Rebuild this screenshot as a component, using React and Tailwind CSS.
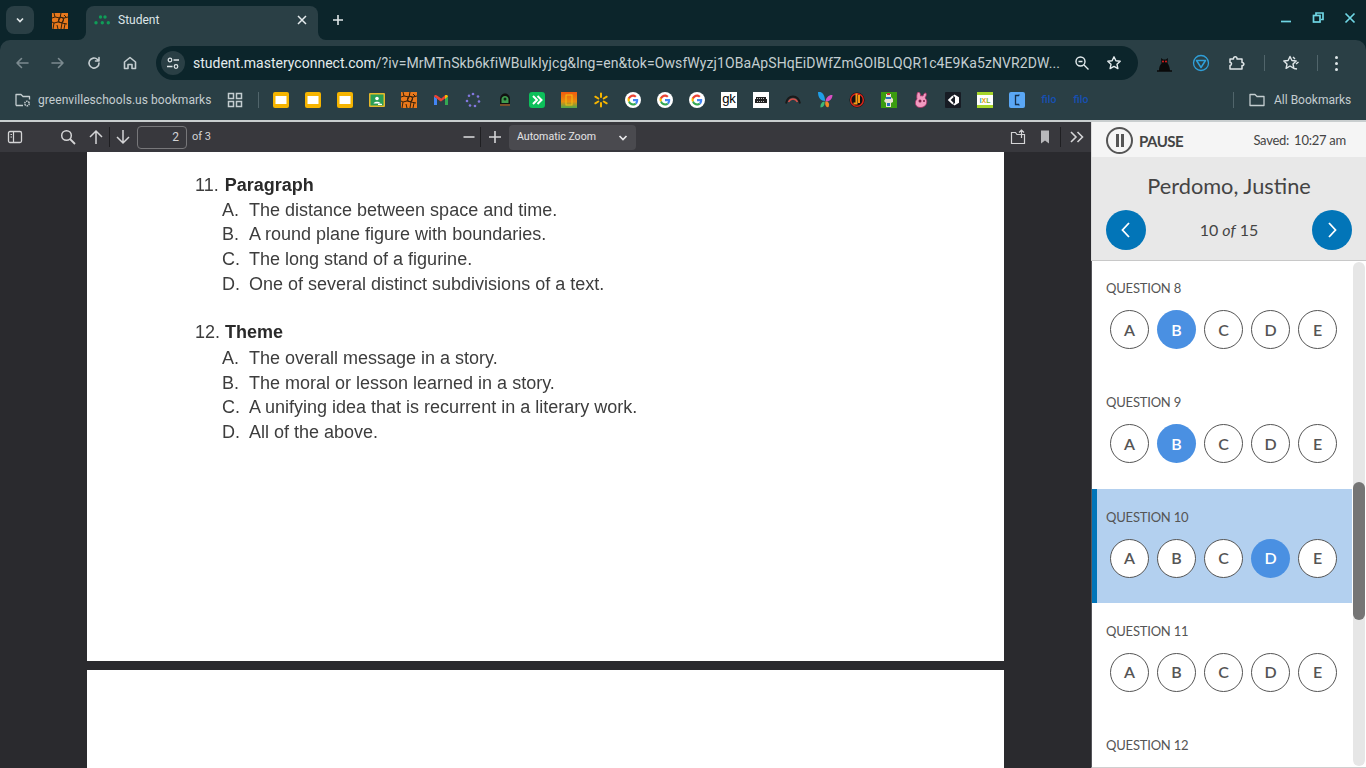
import React from "react";
import { Fragment } from "react";

const Ic = ({ s = 16, children, className = "", vb }) => (
  <svg width={s} height={s} viewBox={vb || `0 0 ${s} ${s}`} fill="none" className={`shrink-0 ${className}`}>{children}</svg>
);

const stroke = { stroke: "currentColor", strokeWidth: 1.6, strokeLinecap: "round", strokeLinejoin: "round" };

const Slides = () => (
  <Ic><rect width="16" height="16" rx="2" fill="#f5b400" /><rect x="2.500" y="4" width="11" height="8" fill="#fff" /></Ic>
);
const Classroom = () => (
  <Ic><rect y="1" width="16" height="14" rx="1" fill="#e4b82a" /><rect x="1.500" y="2.500" width="13" height="11" fill="#2a9d55" /><circle cx="8" cy="6.500" r="1.800" fill="#fff" /><path d="M4.500 11.500c.5-2.500 6.500-2.500 7 0z" fill="#fff" /><rect x="9" y="11.800" width="4" height="1.200" fill="#fff" /></Ic>
);
const Mosaic = () => (
  <Ic>
    <rect width="16" height="16" fill="#e8781c" />
    <path d="M2 0l1 4-3 1M3 4l5 1 1-5M8 5l-2 4 4 1 2-5-4-1M12 5l4-1M10 10l-1 6M6 9l-4 1-1 6M2 10l-2-1M10 10l5 1M13 11l-1 5M5 12l1 4M12 2l2 2" stroke="#33200c" strokeWidth="1" />
    <circle cx="9" cy="7" r="2.600" stroke="#33200c" strokeWidth=".9" />
  </Ic>
);
const Gmail = () => (
  <Ic>
    <path d="M1 13V4.500l3 2V13z" fill="#4285f4" /><path d="M12 13V6.500l3-2V13z" fill="#34a853" />
    <path d="M1 4.500C1 3 2.500 2.500 3.500 3.200L8 6.500 8 9.500 1 4.500z" fill="#ea4335" />
    <path d="M12 3.200C13.500 2.500 15 3 15 4.500l-3 2.500z" fill="#fbbc04" /><path d="M4 3.800l4 3 4-3.600v3.300L8 9.500 4 6.500z" fill="#ea4335" />
  </Ic>
);
const Ring = () => (
  <Ic>
    <circle cx="8" cy="8" r="5.800" stroke="#3a3f4a" strokeWidth="1" />
    {[[8, 2], [13, 4.500], [14, 9.500], [10, 14], [5, 13.500], [2, 9], [4, 3.800]].map(([x, y], i) => <circle key={i} cx={x} cy={y} r="1.300" fill="#8278e0" />)}
  </Ic>
);
const Pack = () => (
  <Ic>
    <path d="M3 14V7c0-3 2-5.500 5-5.500S13 4 13 7v7z" fill="#111" />
    <path d="M4.500 11V7.500C4.500 5.500 6 4 8 4s3.500 1.500 3.500 3.500V11z" fill="#3f9d4f" />
    <circle cx="8" cy="7" r="1.500" fill="#0c2a18" /><rect x="3" y="12" width="10" height="2" fill="#7a4f2a" />
  </Ic>
);
const GreenChev = () => (
  <Ic>
    <rect width="16" height="16" rx="3" fill="#0cbf5a" />
    <path d="M4 4l4 4-4 4M8.500 4l4 4-4 4" stroke="#fff" strokeWidth="2" />
  </Ic>
);
const OrangeBox = () => (
  <Ic>
    <defs><linearGradient id="og" x1="0" y1="0" x2="0" y2="1"><stop offset="0" stopColor="#f05a10" /><stop offset=".6" stopColor="#e8900f" /><stop offset="1" stopColor="#4ea64a" /></linearGradient></defs>
    <rect width="16" height="16" fill="url(#og)" /><rect x="5" y="3" width="6" height="10" stroke="#f3c012" strokeWidth="1" />
  </Ic>
);
const Spark = () => (
  <Ic>
    <g stroke="#f7b500" strokeWidth="2" strokeLinecap="round">
      <path d="M8 1.500v3.500M8 11v3.500M2.300 4.700l3 1.800M10.700 9.500l3 1.800M2.300 11.300l3-1.800M10.700 6.500l3-1.800" />
    </g>
  </Ic>
);
const Goog = () => (
  <Ic>
    <circle cx="8" cy="8" r="8" fill="#fff" />
    <path d="M13.200 8.200c0-.4 0-.8-.1-1.100H8v2.100h3c-.1.700-.5 1.300-1.100 1.700l1.700 1.300c1-.9 1.600-2.300 1.600-4z" fill="#4285f4" />
    <path d="M8 13.500c1.500 0 2.700-.5 3.600-1.300l-1.700-1.300c-.5.300-1.100.5-1.900.5-1.400 0-2.700-1-3.100-2.300L3.100 10C4 12.100 5.800 13.500 8 13.500z" fill="#34a853" />
    <path d="M4.900 8.600c-.2-.7-.2-1.500 0-2.200L3.100 5.100c-.8 1.600-.8 3.400 0 4.900z" fill="#fbbc05" />
    <path d="M8 4.700c.8 0 1.500.3 2.100.8l1.500-1.500C10.600 3.100 9.400 2.500 8 2.500 5.800 2.500 4 3.800 3.100 5.700l1.800 1.400C5.300 5.700 6.600 4.700 8 4.700z" fill="#ea4335" />
  </Ic>
);
const Gk = () => (
  <div className="w-4 h-4 shrink-0 bg-white text-black text-[13px] leading-[14px] text-center font-['Liberation_Sans',sans-serif]">gk</div>
);
const Blob = () => (
  <Ic>
    <rect width="16" height="16" fill="#fff" />
    <path d="M3 5h10v2h1v4H2V7h1z" fill="#222" /><path d="M4 6.500h8M4 9.500h8" stroke="#bbb" strokeWidth="1" strokeDasharray="1 1" />
  </Ic>
);
const Arc = () => (
  <Ic>
    <path d="M1 11.500C2 6.500 5 4.500 8 4.500S14 6.500 15 11.500" stroke="#1a1a1a" strokeWidth="1.800" />
    <path d="M3.500 10C4.500 8 6 7 8 7s3.500 1 4.500 3" stroke="#d8504a" strokeWidth="1.500" />
  </Ic>
);
const Butterfly = () => (
  <Ic>
    <path d="M1 0c4-1 7 3 7 9-4 0-7-3-7-9z" fill="#1f9fe8" /><path d="M15.500 3c-3-.5-6.500 2-7 6.500C12 10 15.500 7 15.500 3z" fill="#d94fc4" />
    <path d="M3.500 15.500c-.5-3 1.500-6 4-6 .5 3-1 6-4 6z" fill="#3cb878" /><path d="M8.500 9.500c3-.5 4.500 2.500 3 5.500-2.500 1-4-2.500-3-5.500z" fill="#f08a24" />
  </Ic>
);
const RedL = () => (
  <Ic>
    <circle cx="8" cy="8" r="7.500" fill="#111" /><circle cx="8" cy="8" r="6.300" stroke="#d8251b" strokeWidth="1.500" />
    <path d="M7.500 1.500v10H4.500M10 3v8" stroke="#f59a16" strokeWidth="2" />
  </Ic>
);
const Sprite = () => (
  <Ic>
    <rect width="16" height="16" fill="#3c9c10" /><path d="M5 2h5v3l2 2v3l-2 1v4H5v-4L3 9l2-3z" fill="#e9e3d3" />
    <path d="M5 5h5v2H5zM6 11h3v3H6z" fill="#2a6cc0" /><rect x="6" y="1" width="3" height="2" fill="#c33" />
  </Ic>
);
const Bunny = () => (
  <Ic>
    <path d="M5 0c2 0 2.500 2 2.500 4 1-.3 1.500-.3 2.500 0 .5-2 1.500-3.500 3-3 1 2-.5 4-1 5 3 2 2.500 9-4 9.500-6 .5-7-5.500-4-8.500C3.500 5.500 3.500 1.500 5 0z" fill="#f29ac0" stroke="#a82e66" strokeWidth=".800" />
    <circle cx="7" cy="9" r="1.500" fill="#7d2149" /><circle cx="11" cy="9" r="1" fill="#7d2149" />
  </Ic>
);
const Unity = () => (
  <Ic>
    <rect width="16" height="16" rx="1" fill="#171c24" />
    <path d="M9.500 2.500L14 5.200v5.500L9.500 13.500 8 12.200l2-1.200V5L8 3.800zM2.800 8L7.500 3.500l1.200 1.500-3 3 3 3-1.200 1.500z" fill="#fff" />
  </Ic>
);
const Ixl = () => (
  <div className="w-4 h-4 shrink-0 bg-white relative flex items-center justify-center border-y-[3px] border-[#a6d62a]">
    <span className="text-[7px] leading-none font-bold text-[#e8a010] font-['Liberation_Sans',sans-serif]"><span className="text-[#1ea5d8]">I</span>X<span className="text-[#7ab51d]">L</span></span>
  </div>
);
const Bracket = () => (
  <Ic>
    <rect width="16" height="16" rx="2" fill="#5aa7f5" /><path d="M10 3.500H6.500v9H10M10 2.500v1M10 12.500v1" stroke="#15304d" strokeWidth="1.300" />
  </Ic>
);
const Filo = () => (
  <div className="w-4 h-4 shrink-0 flex items-center justify-center text-[10.500px] leading-none font-medium text-[#1650b4] font-['Roboto',sans-serif]">filo</div>
);

const Question = ({ n, sel, active, labelOnly }) => (
  <div className={`h-[114.2px] shrink-0 pt-[19.500px] ${active ? "bg-[#b3d0ef] border-l-[5px] border-[#0275b8] pl-[9px]" : "pl-[14px]"}`}>
    <div className="text-[13px] tracking-[-0.2px] leading-[17px] text-[#555] font-['Lato',sans-serif]">QUESTION {n}</div>
    {!labelOnly && (
      <div className="flex gap-2 ml-1 mt-[13px]">
        {["A", "B", "C", "D", "E"].map((c) => (
          <div
            key={c}
            className={`w-[39px] h-[39px] rounded-full flex items-center justify-center text-[16px] font-semibold font-['Lato',sans-serif] ${c === sel ? "bg-[#4a90e2] text-white" : "bg-white border border-[#555] text-[#555]"}`}
          >
            {c}
          </div>
        ))}
      </div>
    )}
  </div>
);

const Pdf = ({ num, title, items, className = "", titleClass = "" }) => (
  <div className={className}>
    <div className="h-[24.7px] leading-[24.7px]">
      {num}. <b className={`font-bold text-[#2a2a2a] ${titleClass}`}>{title}</b>
    </div>
    {items.map(([l, t]) => (
      <div key={l} className="h-[24.7px] leading-[24.7px] flex pl-[27px]">
        <span className="w-[27px]">{l}.</span>
        <span>{t}</span>
      </div>
    ))}
  </div>
);

const Bookmarks = [Slides, Slides, Slides, Classroom, Mosaic, Gmail, Ring, Pack, GreenChev, OrangeBox, Spark, Goog, Goog, Goog, Gk, Blob, Arc, Butterfly, RedL, Sprite, Bunny, Unity, Ixl, Bracket, Filo, Filo];

export default function App() {
  return (
    <div className="w-[1366px] h-[768px] overflow-hidden flex flex-col bg-[#0c252b] font-['Roboto',sans-serif]">
      {/* tab strip */}
      <div className="h-10 shrink-0 flex items-end pl-[6px] relative">
        <div className="absolute top-0 right-0 h-[35px] flex items-center text-[#6fd6e4]">
          <div className="w-8 flex justify-center"><Ic s={12}><path d="M1 9.500h10" stroke="currentColor" strokeWidth="1.700" /></Ic></div>
          <div className="w-8 flex justify-center"><Ic s={12}><path d="M4 3V1h7v6.500H9" stroke="currentColor" strokeWidth="1.700" /><rect x="1.500" y="3.500" width="6.500" height="6.500" stroke="currentColor" strokeWidth="1.700" /></Ic></div>
          <div className="w-8 flex justify-center"><Ic s={12}><path d="M1.500 1.500l9 9M10.500 1.500l-9 9" stroke="currentColor" strokeWidth="1.700" /></Ic></div>
        </div>
        <div className="w-7 h-7 mb-[6px] rounded-lg bg-[#2a3f45] flex items-center justify-center text-[#dfe6e8]">
          <Ic s={12}><path d="M3 4.500l3 3 3-3" stroke="currentColor" strokeWidth="1.700" /></Ic>
        </div>
        <div className="w-[52px] h-[34px] flex items-center justify-center pb-[5px]"><Mosaic /></div>
        <div className="w-[232px] h-[34px] rounded-t-lg bg-[#2a3f45] relative flex items-center pl-[8px] pb-[6px]">
          <div className="absolute -left-2 bottom-0 w-2 h-2 bg-[#2a3f45]"><div className="w-2 h-2 rounded-br-lg bg-[#0c252b]" /></div>
          <div className="absolute -right-2 bottom-0 w-2 h-2 bg-[#2a3f45]"><div className="w-2 h-2 rounded-bl-lg bg-[#0c252b]" /></div>
          <Ic>
            <g fill="#0f9d58"><circle cx="6.500" cy="5" r="1.700" /><circle cx="11" cy="5" r="1.700" /><circle cx="2" cy="10.700" r="1.700" /><circle cx="8.300" cy="10.700" r="1.700" /><circle cx="14.300" cy="10.700" r="1.700" /></g>
          </Ic>
          <span className="ml-[8px] text-[12px] text-[#dfe6e8]">Student</span>
          <div className="absolute right-[10px] top-[8px] text-[#e6ecee]"><Ic s={12}><path d="M2 2l8 8M10 2l-8 8" stroke="currentColor" strokeWidth="1.500" /></Ic></div>
        </div>
        <div className="ml-[14px] mb-[14px] text-[#dfe6e8]"><Ic s={12}><path d="M6 1v10M1 6h10" stroke="currentColor" strokeWidth="1.600" /></Ic></div>
      </div>

      {/* nav toolbar */}
      <div className="h-11 shrink-0 bg-[#2a3f45] rounded-t-[10px] flex items-center text-[#c4cdd0] pt-[2px]">
        <div className="w-[156px] shrink-0 flex items-center pl-[14px] gap-5">
          <Ic className="text-[#7c8b90]"><path d="M14 8H3M7.500 3.500L3 8l4.500 4.500" {...stroke} /></Ic>
          <Ic className="text-[#7c8b90]"><path d="M2 8h11M8.500 3.500L13 8l-4.500 4.500" {...stroke} /></Ic>
          <Ic><path d="M13 8a5 5 0 1 1-1.500-3.500L13 6M13 2.500V6H9.500" {...stroke} /></Ic>
          <Ic><path d="M2.500 7L8 2.500 13.500 7v6.500h-3.500V9.500H6v4H2.500z" {...stroke} /></Ic>
        </div>
        <div className="w-[982px] h-[34px] shrink-0 rounded-full bg-[#0c252b] flex items-center pl-[5px] pr-[16px]">
          <div className="w-6 h-6 rounded-full bg-[#2a3f45] flex items-center justify-center text-[#dfe6e8]">
            <Ic s={14}><circle cx="4" cy="4" r="1.800" stroke="currentColor" strokeWidth="1.200" /><path d="M7.500 4H13M1 10.500h5.500" stroke="currentColor" strokeWidth="1.300" /><circle cx="10" cy="10.500" r="1.800" stroke="currentColor" strokeWidth="1.200" /></Ic>
          </div>
          <div className="ml-[8px] w-[868px] text-[14px] leading-[34px] whitespace-nowrap text-[#e4ecee]">
            student.masteryconnect.com<span className="text-[#c4ced1] tracking-[0.08px]">/?iv=MrMTnSkb6kfiWBulkIyjcg&amp;lng=en&amp;tok=OwsfWyzj1OBaApSHqEiDWfZmGOIBLQQR1c4E9Ka5zNVR2DW...</span>
          </div>
          <div className="flex-1" />
          <Ic className="mr-[16px] text-[#e4ecee]"><circle cx="6.500" cy="6.500" r="4.500" stroke="currentColor" strokeWidth="1.400" /><path d="M10 10l4.500 4.500M4.500 6.500h4" stroke="currentColor" strokeWidth="1.400" /></Ic>
          <Ic className="text-[#e4ecee]"><path d="M8 1.800l1.900 4 4.300.5-3.200 3 .9 4.300L8 11.400l-3.900 2.200.9-4.300-3.200-3 4.300-.5z" stroke="currentColor" strokeWidth="1.400" strokeLinejoin="round" /></Ic>
        </div>
        <div className="flex-1 flex items-center pl-[18px]">
          <Ic s={18}><path d="M3 17c0-4 1-6 2.500-7.500L5 4l2 1.500h3L12 4l-.5 5c1.500 2 2.500 5 2.500 8z" fill="#0a0a0a" /><path d="M1 17h15" stroke="#0a0a0a" strokeWidth="1.500" /><circle cx="7" cy="7.500" r=".9" fill="#e22" /><circle cx="10" cy="7.500" r=".9" fill="#e22" /></Ic>
          <div className="ml-[18px]"><Ic s={18}><circle cx="9" cy="9" r="7.500" stroke="#2f9fd8" strokeWidth="1.300" /><path d="M4.500 6.500h9L9 13.500z" stroke="#2f9fd8" strokeWidth="1.500" strokeLinejoin="round" /></Ic></div>
          <div className="ml-[18px] text-[#dfe6e8]"><Ic s={18}><path d="M2 6h3.500c-.3-3 3.800-3 3.500 0H14v3.500c2.500-.3 2.500 3.500 0 3V16H2v-3.500c2-.2 2-3.300 0-3z" transform="translate(0 -1)" stroke="currentColor" strokeWidth="1.500" strokeLinejoin="round" /></Ic></div>
          <div className="w-px h-4 bg-[#51656b] ml-[18px]" />
          <div className="ml-[17px] text-[#dfe6e8]"><Ic s={18}><path d="M8 2.500l1.900 4 4.300.5-3.200 3 .9 4.300L8 12l-3.900 2.300.9-4.300-3.200-3 4.300-.5zM11 3l2 2 M14 10l2.500-2 M12 14.500l3 .5" stroke="currentColor" strokeWidth="1.400" strokeLinejoin="round" /></Ic></div>
          <div className="w-px h-4 bg-[#51656b] ml-[17px]" />
          <div className="ml-[17px] text-[#dfe6e8] flex flex-col gap-[3px]">
            <div className="w-[3px] h-[3px] rounded-full bg-current" /><div className="w-[3px] h-[3px] rounded-full bg-current" /><div className="w-[3px] h-[3px] rounded-full bg-current" />
          </div>
        </div>
      </div>

      {/* bookmarks */}
      <div className="h-9 shrink-0 bg-[#2a3f45] flex items-center text-[#c4cdd0] pl-[15px] pb-[4px]">
        <Ic><path d="M1 13.500V2.500h5l2 2h6.500v3M8 13.500H1" stroke="currentColor" strokeWidth="1.300" strokeLinejoin="round" /><circle cx="12" cy="11.500" r="2.300" stroke="currentColor" strokeWidth="1.500" strokeDasharray="1.500 .7" /></Ic>
        <span className="ml-[7px] w-[174px] text-[12px] tracking-[0.06px] whitespace-nowrap">greenvilleschools.us bookmarks</span>
        <div className="ml-[15px]"><Ic><g stroke="currentColor" strokeWidth="1.500"><rect x="1.500" y="1.500" width="5" height="5" /><rect x="9.500" y="1.500" width="5" height="5" /><rect x="1.500" y="9.500" width="5" height="5" /><rect x="9.500" y="9.500" width="5" height="5" /></g></Ic></div>
        <div className="w-px h-4 bg-[#51656b] ml-[15px]" />
        <div className="ml-[14px] flex gap-4">
          {Bookmarks.map((B, i) => <Fragment key={i}><B /></Fragment>)}
        </div>
        <div className="w-px h-4 bg-[#51656b] ml-[144px]" />
        <div className="ml-[15px]"><Ic><path d="M1 13.500V2.500h5l2 2h7v9z" stroke="currentColor" strokeWidth="1.300" strokeLinejoin="round" /></Ic></div>
        <span className="ml-[9px] text-[12px] whitespace-nowrap">All Bookmarks</span>
      </div>
      <div className="h-[2px] shrink-0 bg-[#c9cecf]" />

      {/* content */}
      <div className="flex-1 flex min-h-0">
        <div className="w-[1091px] shrink-0 flex flex-col bg-[#2a2a2e] min-h-0">
          <div className="h-[30px] shrink-0 bg-[#38383d] flex items-center text-[#d4d4d6]">
            <div className="ml-[7px]"><Ic><rect x="1.500" y="2.500" width="13" height="11" rx="1.500" stroke="currentColor" strokeWidth="1.300" /><path d="M6.500 2.500v11M3.500 5.500h1.500M3.500 8h1.500" stroke="currentColor" strokeWidth="1.200" /></Ic></div>
            <div className="ml-[37px]"><Ic><circle cx="6.500" cy="6.500" r="4.800" stroke="currentColor" strokeWidth="1.500" /><path d="M10 10l5 5" stroke="currentColor" strokeWidth="1.800" /></Ic></div>
            <div className="ml-[12px]"><Ic><path d="M8 15V2M2 8l6-6 6 6" stroke="currentColor" strokeWidth="1.500" /></Ic></div>
            <div className="w-px h-[20px] bg-[#1f1f22] ml-[5px]" />
            <div className="ml-[5px]"><Ic><path d="M8 1v13M2 8l6 6 6-6" stroke="currentColor" strokeWidth="1.500" /></Ic></div>
            <div className="ml-[6px] w-[50px] h-[23px] border border-[#77777a] rounded-sm flex items-center justify-end pr-[7px] text-[12px]">2</div>
            <span className="ml-[5px] text-[11px]">of 3</span>
            <div className="ml-[251px]"><Ic s={14}><path d="M1.500 7h11" stroke="currentColor" strokeWidth="1.600" /></Ic></div>
            <div className="w-px h-[20px] bg-[#1f1f22] ml-[4px]" />
            <div className="ml-[7px]"><Ic s={14}><path d="M1 7h12M7 1v12" stroke="currentColor" strokeWidth="1.600" /></Ic></div>
            <div className="ml-[7px] w-[127px] h-[25px] bg-[#4a4a4f] rounded-sm flex items-center pl-[8px] text-[10.600px] text-[#e4e4e6] relative">
              Automatic Zoom
              <div className="absolute right-[8px] top-[8px]"><Ic s={10}><path d="M1.500 3l3.500 3.500L8.500 3" stroke="#e8e8ea" strokeWidth="1.700" /></Ic></div>
            </div>
            <div className="ml-[374px]"><Ic><path d="M1.500 6v8.500h13V5.500H7L5.500 3.500h-4zM11.500 9V1.500M9 3.500l2.500-2.500 2.500 2.500" stroke="currentColor" strokeWidth="1.200" /></Ic></div>
            <div className="ml-[11px] text-[#b8b8bb]"><Ic><path d="M4 1.500h8v13l-4-3-4 3z" fill="currentColor" /></Ic></div>
            <div className="w-px h-[20px] bg-[#1f1f22] ml-[7px]" />
            <div className="ml-[8px]"><Ic><path d="M2 3l5 5-5 5M8.500 3l5 5-5 5" stroke="currentColor" strokeWidth="1.600" /></Ic></div>
          </div>
          <div className="flex-1 min-h-0 overflow-hidden pl-[87px]">
            <div className="w-[917px] h-[509px] bg-white pt-[21px] pl-[108px] text-[18px] text-[#3d3d3d] font-['Liberation_Sans',sans-serif] blur-[0.3px]">
              <Pdf
                num="11"
                title="Paragraph"
                titleClass="ml-[1px]"
                items={[
                  ["A", "The distance between space and time."],
                  ["B", "A round plane figure with boundaries."],
                  ["C", "The long stand of a figurine."],
                  ["D", "One of several distinct subdivisions of a text."],
                ]}
              />
              <Pdf
                className="mt-[24px] [&>div:first-child]:h-[25.400px]"
                num="12"
                title="Theme"
                items={[
                  ["A", "The overall message in a story."],
                  ["B", "The moral or lesson learned in a story."],
                  ["C", "A unifying idea that is recurrent in a literary work."],
                  ["D", "All of the above."],
                ]}
              />
            </div>
            <div className="w-[917px] h-[200px] bg-white mt-[9px]" />
          </div>
        </div>

        {/* sidebar */}
        <div className="w-[275px] shrink-0 flex flex-col bg-white font-['Lato',sans-serif] min-h-0">
          <div className="h-[35px] shrink-0 bg-[#f5f5f5] flex items-center pl-[14px] pr-[20px] border-l border-[#dddddd]">
            <div className="w-[27px] h-[27px] rounded-full border-2 border-[#555] flex items-center justify-center gap-[2px] mt-[2px]">
              <div className="w-[3px] h-[13px] bg-[#555]" /><div className="w-[3px] h-[13px] bg-[#555]" />
            </div>
            <span className="ml-[6px] mt-[3px] font-bold text-[15px] tracking-[-0.5px] text-[#444]">PAUSE</span>
            <span className="ml-auto mt-[3px] text-[13px] tracking-[-0.25px] text-[#444]">Saved:<span className="ml-[5px]">10:27 am</span></span>
          </div>
          <div className="h-[103.67px] shrink-0 bg-[#e8e8e8] border-b border-[#c8c8c8] border-l border-l-[#dddddd] flex flex-col">
            <div className="text-center text-[21.750px] leading-[27px] text-[#444] mt-[16px]">Perdomo, Justine</div>
            <div className="flex items-center justify-between px-[14px] mt-[10px]">
              <div className="w-10 h-10 rounded-full bg-[#0275b8] flex items-center justify-center text-white">
                <Ic s={20}><path d="M13 3l-6.500 7 6.500 7" stroke="currentColor" strokeWidth="1.800" /></Ic>
              </div>
              <div className="text-[16px] text-[#444]">10 <i>of</i> 15</div>
              <div className="w-10 h-10 rounded-full bg-[#0275b8] flex items-center justify-center text-white">
                <Ic s={20}><path d="M7 3l6.500 7L7 17" stroke="currentColor" strokeWidth="1.800" /></Ic>
              </div>
            </div>
          </div>
          <div className="flex-1 min-h-0 flex overflow-hidden border-l border-[#55555a] border-b border-b-[#cfcfcf]">
            <div className="w-[260px] shrink-0 overflow-hidden flex flex-col">
              <Question n={8} sel="B" />
              <Question n={9} sel="B" />
              <Question n={10} sel="D" active />
              <Question n={11} />
              <Question n={12} labelOnly />
            </div>
            <div className="w-[12px] ml-[1px] my-[1px] rounded-md bg-[#e6e6e6] relative">
              <div className="absolute top-[220px] left-0 w-[12px] h-[138px] rounded-md bg-[#757575]" />
            </div>
          </div>
        </div>
      </div>
    </div>
  );
}
